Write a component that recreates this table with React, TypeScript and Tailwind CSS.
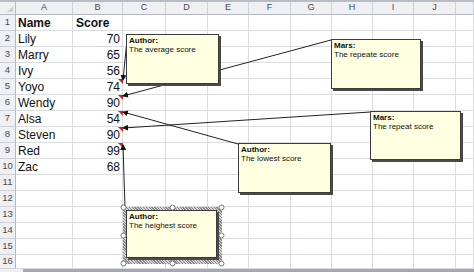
import React from "react";

const cols = ["A", "B", "C", "D", "E", "F", "G", "H", "I", "J", ""];

const people = [
  { name: "Name", score: "Score", head: true },
  { name: "Lily", score: "70" },
  { name: "Marry", score: "65" },
  { name: "Ivy", score: "56" },
  { name: "Yoyo", score: "74" },
  { name: "Wendy", score: "90" },
  { name: "Alsa", score: "54" },
  { name: "Steven", score: "90" },
  { name: "Red", score: "99" },
  { name: "Zac", score: "68" },
];

const rows = Array.from({ length: 16 }, (_, i) => i + 1);

// cells B5..B9 carry a comment
const flagged = [5, 6, 7, 8, 9];

const arrows = [
  { x1: 127, y1: 40, x2: 123, y2: 80 },
  { x1: 331, y1: 40, x2: 123, y2: 96 },
  { x1: 238, y1: 144, x2: 123, y2: 112 },
  { x1: 370, y1: 112, x2: 123, y2: 128 },
  { x1: 125, y1: 208, x2: 123, y2: 145 },
];

// resize handles round the selected comment
const handles = [
  [123, 207], [172, 207], [221, 207],
  [123, 235], [221, 235],
  [123, 263], [172, 263], [221, 263],
];

const Comment = ({ author, text, className }: { author: string; text: string; className: string }) => (
  <div
    className={`absolute bg-[#ffffe1] border border-[#3c3c3c] shadow-[2px_2px_0_#4a4a4a] px-[2px] pt-[1px] text-[8px] leading-[9px] text-[#111] ${className}`}
  >
    <div className="font-bold">{author}</div>
    <div>{text}</div>
  </div>
);

export default function App() {
  return (
    <div className="relative w-[474px] h-[272px] overflow-hidden bg-white font-['Liberation_Sans',Arial,sans-serif]">
      <div className="h-[2px] bg-[#b7bcc3]" />
      <div className="grid grid-cols-[16px_57px_50px_43px_42px_41px_42px_41px_41px_41px_42px_18px] grid-rows-[13px_repeat(15,16px)_14px]">
        {/* corner */}
        <div className="flex items-end justify-end p-[2px] bg-[#eef0f3] border-r border-b border-[#b4b9c0]">
          <div className="w-0 h-0 border-l-[6px] border-l-transparent border-b-[6px] border-b-[#c9ccd1]" />
        </div>
        {cols.map((c, i) => (
          <div
            key={"h" + i}
            className="flex items-center justify-center bg-[#eef0f3] border-r border-b border-r-[#cdd1d6] border-b-[#b4b9c0] text-[9px] text-[#4a4a4a]"
          >
            {c}
          </div>
        ))}
        {rows.map((r) => (
          <React.Fragment key={r}>
            <div className="flex items-center justify-center bg-[#eef0f3] border-r border-b border-r-[#b4b9c0] border-b-[#cdd1d6] text-[9.5px] text-[#4a4a4a]">
              {r}
            </div>
            {cols.map((_, ci) => {
              const p = people[r - 1];
              let content: React.ReactNode = null;
              let align = "justify-start pl-[2px]";
              if (p && ci === 0) {
                content = p.name;
              }
              if (p && ci === 1) {
                content = p.score;
                align = p.head ? "justify-start pl-[3px]" : "justify-end pr-[2px]";
              }
              return (
                <div
                  key={ci}
                  className={`flex items-center border-r border-b border-[#dadcdf] text-[12px] text-[#111] ${align} ${p?.head ? "font-bold" : ""}`}
                >
                  {content}
                </div>
              );
            })}
          </React.Fragment>
        ))}
      </div>
      <div className="flex h-[3px]">
        <div className="w-[23px] bg-[#eef0f3]" />
        <div className="flex-1 bg-[#a3a8ae]" />
      </div>

      {/* comment arrows and indicators */}
      <svg className="absolute inset-0" width="474" height="272">
        <defs>
          <marker id="ah" markerWidth="6" markerHeight="6" refX="5" refY="3" orient="auto" markerUnits="userSpaceOnUse">
            <path d="M0,0 L6,3 L0,6 z" fill="#111" />
          </marker>
        </defs>
        {flagged.map((r) => {
          const top = 15 + (r - 1) * 16;
          return <path key={r} d={`M118,${top} L123,${top} L123,${top + 5} z`} fill="#d0202a" />;
        })}
        {arrows.map((a, i) => (
          <line key={i} x1={a.x1} y1={a.y1} x2={a.x2} y2={a.y2} stroke="#222" strokeWidth="1" markerEnd="url(#ah)" />
        ))}
      </svg>

      <Comment author="Author:" text="The average score" className="left-[126px] top-[34px] w-[93px] h-[50px]" />
      <Comment author="Mars:" text="The repeate score" className="left-[331px] top-[39px] w-[90px] h-[50px]" />
      <Comment author="Mars:" text="The repeat score" className="left-[370px] top-[111px] w-[91px] h-[49px]" />
      <Comment author="Author:" text="The lowest score" className="left-[238px] top-[143px] w-[93px] h-[50px]" />

      {/* selected comment */}
      <div className="absolute left-[123px] top-[207px] w-[99px] h-[57px] p-[3px] bg-[repeating-linear-gradient(45deg,#8c8c8c_0_1px,#d2d2d2_1px_2px)]">
        <div className="w-[91px] h-[48px] bg-[#ffffe1] border border-[#3c3c3c] shadow-[2px_2px_0_#4a4a4a] px-[2px] pt-[1px] text-[8px] leading-[9px] text-[#111]">
          <div className="font-bold">Author:</div>
          <div>The heighest score</div>
        </div>
      </div>
      <svg className="absolute inset-0 pointer-events-none" width="474" height="272">
        {handles.map(([x, y], i) => (
          <circle key={i} cx={x + 0.5} cy={y + 0.5} r="2.5" fill="#fff" stroke="#7a7a7a" strokeWidth="1" />
        ))}
      </svg>
    </div>
  );
}
